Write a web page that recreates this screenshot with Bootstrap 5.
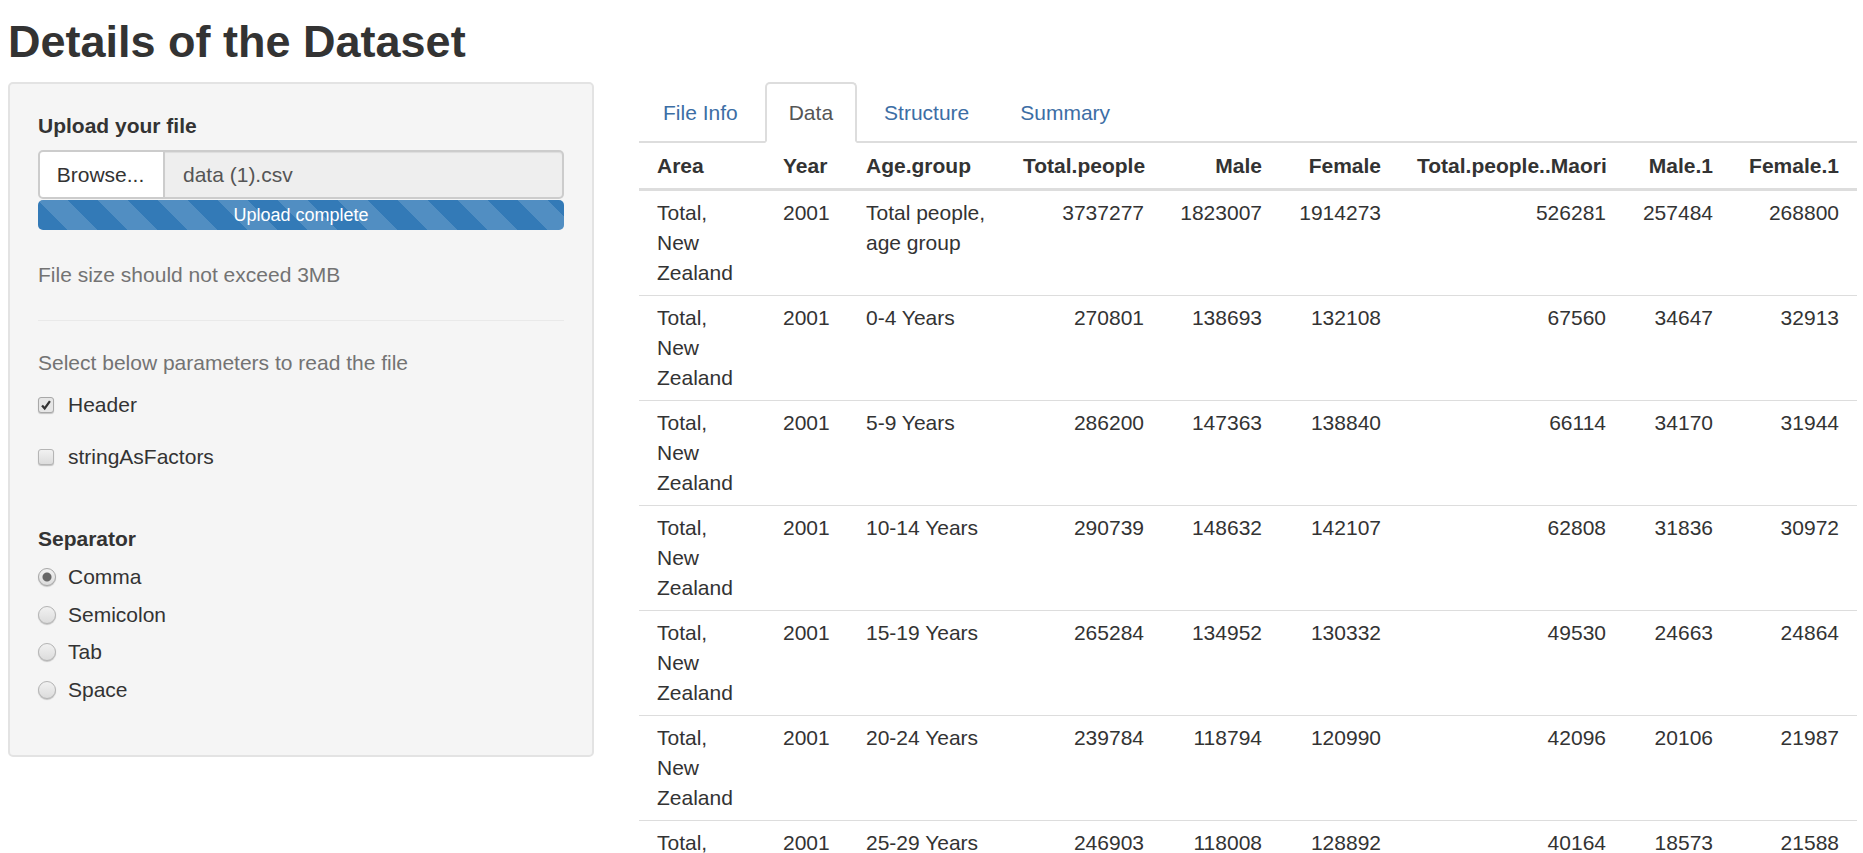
<!DOCTYPE html>
<html lang="en">
<head>
<meta charset="utf-8">
<title>Details of the Dataset</title>
<link href="https://cdn.jsdelivr.net/npm/bootstrap@5.3.0/dist/css/bootstrap.min.css" rel="stylesheet">
<style>
html,body{height:100%}
body{font-family:"Liberation Sans",Arial,sans-serif;font-size:21px;line-height:30px;color:#333;background:#fff}
.page-wrap{padding:0 0 0 8px}
.page-title{font-size:45px;font-weight:700;line-height:50px;color:#333;margin:0;padding:17px 0 15px;font-family:"Liberation Sans",Arial,sans-serif}
.side-col{width:586px;flex:none}
.main-col{width:1218px;flex:none;margin-left:45px}
.well-box{background:#f5f5f5;border:2px solid #e3e3e3;border-radius:5px;padding:27px 28px 0;height:675px}
.fld-label{font-weight:700;line-height:30px;margin:0;display:block}
.upload-label{margin-top:0;margin-bottom:9px}
.file-group{height:49px}
.file-group .btn-browse{width:127px;flex:none;background:#fff;border:2px solid #ccc;border-radius:5px 0 0 5px;font-size:21px;color:#333;padding:0 2px 0 0}
.file-group .file-name{flex:1;background:#eee;border:2px solid #ccc;border-left:0;border-radius:0 5px 5px 0;font-size:21px;color:#555;padding:0 18px;height:49px;box-shadow:inset 0 1px 1px rgba(0,0,0,.075)}
.upload-bar{height:30px;border-radius:5px;background:#f5f5f5;margin-top:1px}
.upload-bar .progress-bar{background-color:#337ab7;background-size:60px 60px;width:100%;color:#fff;font-size:18px;line-height:30px}
.help-note{color:#737373;margin:30px 0 0;line-height:30px}
.sep-line{border:0;border-top:1px solid #e9e9e9;opacity:1;margin:30px 0 0}
.params-note{color:#737373;margin:27px 0 0;line-height:30px}
.opt-row{display:flex;align-items:center;min-height:30px;padding:0;margin:0}
.opt-row .form-check-input{float:none;margin:0 14px 0 0;flex:none;width:16px;height:16px;border:1px solid #b5b5b5;background-color:#e6e6e6;background-image:linear-gradient(#f1f1f1,#dcdcdc);box-shadow:0 1px 1px rgba(0,0,0,.2);border-radius:3px}
.opt-row .form-check-input[type=radio]{width:18px;height:18px;border-radius:50%;margin-right:12px}
.opt-row .form-check-input:checked{background-color:#e6e6e6;border-color:#a8a8a8}
.opt-row .form-check-input[type=checkbox]:checked{background-image:url("data:image/svg+xml,%3Csvg xmlns='http://www.w3.org/2000/svg' viewBox='0 0 16 16'%3E%3Cpath d='M3.5 8.5l3 3.5 6-8.5' fill='none' stroke='%23333' stroke-width='2.6'/%3E%3C/svg%3E");background-size:100% 100%}
.opt-row .form-check-input[type=radio]:checked{background-image:radial-gradient(circle,#666 0,#666 4px,transparent 5px),linear-gradient(#f1f1f1,#dcdcdc);background-size:100% 100%}
.opt-row .form-check-label{color:#333}
.gap-first{margin-top:12px}
.gap-second{margin-top:22px}
.sep-label{margin-top:52px;margin-bottom:8px}
.radio-row{margin-bottom:7.5px}
.tab-strip{border-bottom:2px solid #ddd;height:61px;gap:3px}
.tab-strip .nav-link{color:#3c6ea5;font-size:21px;line-height:30px;padding:14px 22px;border:2px solid transparent;border-radius:5px 5px 0 0;margin-bottom:-2px;height:61px}
.tab-strip .nav-link.active{color:#555;background:#fff;border-color:#ddd #ddd #fff}
.data-table{table-layout:fixed;width:1218px;margin:0;color:#333;font-size:21px;line-height:30px;--bs-table-color:#333;--bs-table-border-color:#ddd}
.data-table th{padding:7.5px 18px 7px;font-weight:700;border-bottom:3px solid #ddd;white-space:nowrap;vertical-align:bottom}
.data-table td{padding:7px 18px;border-bottom:1px solid #ddd;vertical-align:top}
.data-table td:nth-child(3){padding-right:0}
.data-table thead{border:0}
.data-table tbody{border-top:0}
.w-area{width:126px}.w-year{width:83px}.w-age{width:157px}.w-total{width:157px}.w-male{width:118px}.w-female{width:119px}.w-maori{width:225px}.w-male1{width:107px}.w-female1{width:126px}
</style>
</head>
<body class="overflow-hidden">
<div class="page-wrap">
  <h1 class="page-title">Details of the Dataset</h1>
  <div class="d-flex align-items-start">
    <div class="side-col">
      <div class="well-box">
        <label class="fld-label upload-label">Upload your file</label>
        <div class="d-flex file-group">
          <button type="button" class="btn btn-browse">Browse...</button>
          <input type="text" class="form-control file-name" value="data (1).csv" readonly>
        </div>
        <div class="progress upload-bar">
          <div class="progress-bar progress-bar-striped" role="progressbar">Upload complete</div>
        </div>
        <p class="help-note">File size should not exceed 3MB</p>
        <hr class="sep-line">
        <p class="params-note">Select below parameters to read the file</p>
        <div class="form-check opt-row gap-first">
          <input class="form-check-input" type="checkbox" id="c1" checked>
          <label class="form-check-label" for="c1">Header</label>
        </div>
        <div class="form-check opt-row gap-second">
          <input class="form-check-input" type="checkbox" id="c2">
          <label class="form-check-label" for="c2">stringAsFactors</label>
        </div>
        <label class="fld-label sep-label">Separator</label>
        <div class="form-check opt-row radio-row">
          <input class="form-check-input" type="radio" name="s" id="r1" checked>
          <label class="form-check-label" for="r1">Comma</label>
        </div>
        <div class="form-check opt-row radio-row">
          <input class="form-check-input" type="radio" name="s" id="r2">
          <label class="form-check-label" for="r2">Semicolon</label>
        </div>
        <div class="form-check opt-row radio-row">
          <input class="form-check-input" type="radio" name="s" id="r3">
          <label class="form-check-label" for="r3">Tab</label>
        </div>
        <div class="form-check opt-row radio-row">
          <input class="form-check-input" type="radio" name="s" id="r4">
          <label class="form-check-label" for="r4">Space</label>
        </div>
      </div>
    </div>
    <div class="main-col">
      <ul class="nav nav-tabs tab-strip">
        <li class="nav-item"><a class="nav-link" href="#">File Info</a></li>
        <li class="nav-item"><a class="nav-link active" href="#">Data</a></li>
        <li class="nav-item"><a class="nav-link" href="#">Structure</a></li>
        <li class="nav-item"><a class="nav-link" href="#">Summary</a></li>
      </ul>
      <table class="table data-table">
        <colgroup>
          <col class="w-area"><col class="w-year"><col class="w-age"><col class="w-total"><col class="w-male"><col class="w-female"><col class="w-maori"><col class="w-male1"><col class="w-female1">
        </colgroup>
        <thead>
          <tr><th>Area</th><th>Year</th><th>Age.group</th><th class="text-end">Total.people</th><th class="text-end">Male</th><th class="text-end">Female</th><th class="text-end">Total.people..Maori</th><th class="text-end">Male.1</th><th class="text-end">Female.1</th></tr>
        </thead>
        <tbody>
          <tr><td>Total, New Zealand</td><td>2001</td><td>Total people, age group</td><td class="text-end">3737277</td><td class="text-end">1823007</td><td class="text-end">1914273</td><td class="text-end">526281</td><td class="text-end">257484</td><td class="text-end">268800</td></tr>
          <tr><td>Total, New Zealand</td><td>2001</td><td>0-4 Years</td><td class="text-end">270801</td><td class="text-end">138693</td><td class="text-end">132108</td><td class="text-end">67560</td><td class="text-end">34647</td><td class="text-end">32913</td></tr>
          <tr><td>Total, New Zealand</td><td>2001</td><td>5-9 Years</td><td class="text-end">286200</td><td class="text-end">147363</td><td class="text-end">138840</td><td class="text-end">66114</td><td class="text-end">34170</td><td class="text-end">31944</td></tr>
          <tr><td>Total, New Zealand</td><td>2001</td><td>10-14 Years</td><td class="text-end">290739</td><td class="text-end">148632</td><td class="text-end">142107</td><td class="text-end">62808</td><td class="text-end">31836</td><td class="text-end">30972</td></tr>
          <tr><td>Total, New Zealand</td><td>2001</td><td>15-19 Years</td><td class="text-end">265284</td><td class="text-end">134952</td><td class="text-end">130332</td><td class="text-end">49530</td><td class="text-end">24663</td><td class="text-end">24864</td></tr>
          <tr><td>Total, New Zealand</td><td>2001</td><td>20-24 Years</td><td class="text-end">239784</td><td class="text-end">118794</td><td class="text-end">120990</td><td class="text-end">42096</td><td class="text-end">20106</td><td class="text-end">21987</td></tr>
          <tr><td>Total, New Zealand</td><td>2001</td><td>25-29 Years</td><td class="text-end">246903</td><td class="text-end">118008</td><td class="text-end">128892</td><td class="text-end">40164</td><td class="text-end">18573</td><td class="text-end">21588</td></tr>
        </tbody>
      </table>
    </div>
  </div>
</div>
<script src="https://cdn.jsdelivr.net/npm/bootstrap@5.3.0/dist/js/bootstrap.bundle.min.js"></script>
</body>
</html>
